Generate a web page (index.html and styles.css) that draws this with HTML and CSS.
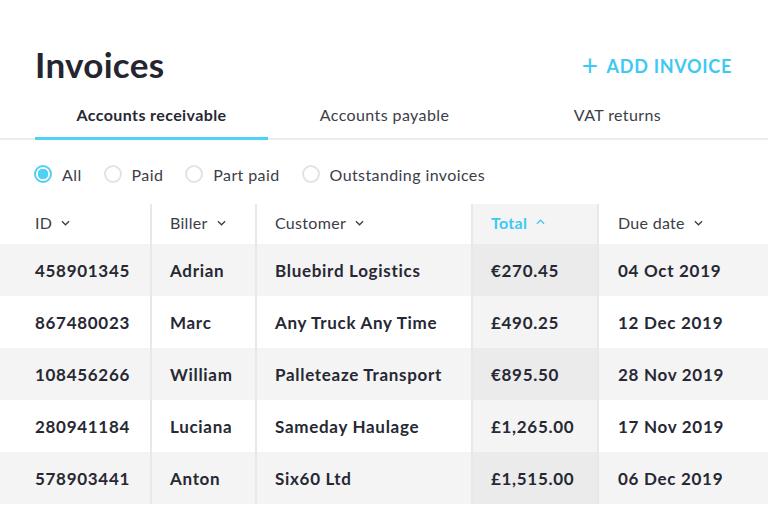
FILE: index.html
```html
<!DOCTYPE html>
<html>
<head>
<meta charset="utf-8">
<link rel="stylesheet" href="styles.css">
</head>
<body>
<div class="page">
  <header class="top">
    <h1 class="title">Invoices</h1>
    <a class="add"><span class="plus">+</span>ADD INVOICE</a>
  </header>
  <nav class="tabs">
    <div class="tab active">Accounts receivable</div>
    <div class="tab">Accounts payable</div>
    <div class="tab">VAT returns</div>
  </nav>
  <div class="filters">
    <label class="radio on"><span class="dot"></span>All</label>
    <label class="radio"><span class="dot"></span>Paid</label>
    <label class="radio"><span class="dot"></span>Part paid</label>
    <label class="radio"><span class="dot"></span>Outstanding invoices</label>
  </div>
  <div class="table">
    <div class="row head">
      <div class="cell c1">ID <svg class="chev" viewBox="0 0 10 6"><path d="M1 1l4 4 4-4"/></svg></div>
      <div class="cell c2">Biller <svg class="chev" viewBox="0 0 10 6"><path d="M1 1l4 4 4-4"/></svg></div>
      <div class="cell c3">Customer <svg class="chev" viewBox="0 0 10 6"><path d="M1 1l4 4 4-4"/></svg></div>
      <div class="cell c4 sorted">Total <svg class="chev up" viewBox="0 0 10 6"><path d="M1 5l4-4 4 4"/></svg></div>
      <div class="cell c5">Due date <svg class="chev" viewBox="0 0 10 6"><path d="M1 1l4 4 4-4"/></svg></div>
    </div>
    <div class="row alt">
      <div class="cell c1">458901345</div><div class="cell c2">Adrian</div><div class="cell c3">Bluebird Logistics</div><div class="cell c4">€270.45</div><div class="cell c5">04 Oct 2019</div>
    </div>
    <div class="row">
      <div class="cell c1">867480023</div><div class="cell c2">Marc</div><div class="cell c3">Any Truck Any Time</div><div class="cell c4">£490.25</div><div class="cell c5">12 Dec 2019</div>
    </div>
    <div class="row alt">
      <div class="cell c1">108456266</div><div class="cell c2">William</div><div class="cell c3">Palleteaze Transport</div><div class="cell c4">€895.50</div><div class="cell c5">28 Nov 2019</div>
    </div>
    <div class="row">
      <div class="cell c1">280941184</div><div class="cell c2">Luciana</div><div class="cell c3">Sameday Haulage</div><div class="cell c4">£1,265.00</div><div class="cell c5">17 Nov 2019</div>
    </div>
    <div class="row alt">
      <div class="cell c1">578903441</div><div class="cell c2">Anton</div><div class="cell c3">Six60 Ltd</div><div class="cell c4">£1,515.00</div><div class="cell c5">06 Dec 2019</div>
    </div>
  </div>
</div>
</body>
</html>
```
FILE: styles.css
```css
* { box-sizing: border-box; }
html, body { margin: 0; padding: 0; background: #fff; }
body { font-family: Lato, "Noto Sans", sans-serif; color: #272833; width: 768px; height: 506px; overflow: hidden; }

.top { display: flex; justify-content: space-between; align-items: center; padding: 36px 36px 0 35px; height: 92px; }
.title { margin: 0; font-size: 35px; font-weight: 700; letter-spacing: 0.3px; line-height: 40px; color: #24252f; }
.add { display: flex; align-items: center; color: #3ec9f2; font-weight: 700; font-size: 18px; letter-spacing: 0.7px; margin-top: 4px; }
.plus { font-size: 28px; font-weight: 400; margin-right: 8px; line-height: 20px; position: relative; top: -1px; }

.tabs { display: flex; padding-left: 35px; border-bottom: 2px solid #ececec; height: 48px; }
.tab { width: 233px; text-align: center; font-size: 16px; letter-spacing: 0.4px; color: #3c3d47; padding-top: 13px; }
.tab.active { font-weight: 700; color: #272833; border-bottom: 3px solid #4fd0f5; margin-bottom: -2px; }

.filters { display: flex; align-items: center; padding: 4px 0 0 34px; height: 64px; }
.radio { display: flex; align-items: center; font-size: 16px; letter-spacing: 0.4px; color: #3c3d47; margin-right: 22px; }
.dot { width: 18px; height: 18px; border-radius: 50%; border: 2px solid #e3e3e6; margin-right: 10px; display: inline-block; }
.radio.on .dot { border-color: #4fd0f5; background: radial-gradient(circle, #4fd0f5 0 5px, #fff 5.5px); }

.table { display: flex; flex-direction: column; }
.row { display: grid; grid-template-columns: 150px 105px 216px 128px 169px; height: 52px; }
.row.head { height: 40px; }
.row.alt { background: #f4f4f4; }
.cell { display: flex; align-items: center; padding-left: 18px; font-weight: 700; font-size: 17px; letter-spacing: 0.7px; color: #272833; }
.cell.c1 { padding-left: 35px; }
.cell.c2, .cell.c3, .cell.c4, .cell.c5 { border-left: 2px solid #e8e8e8; }
.cell.c4 { border-right: 2px solid #e8e8e8; background: #f4f4f4; }
.cell.c5 { border-left: none; padding-left: 19px; }
.row.alt .cell.c4 { background: #ebebeb; }
.head .cell { font-weight: 400; font-size: 16px; color: #3c3d47; letter-spacing: 0.3px; padding-bottom: 4px; }
.head .cell.sorted { color: #3ec9f2; font-weight: 700; }
.chev { width: 9px; height: 6px; margin-left: 9px; fill: none; stroke: #3c3d47; stroke-width: 1.4; margin-top: 2px; }
.chev.up { stroke: #3ec9f2; margin-top: -1px; }
```
